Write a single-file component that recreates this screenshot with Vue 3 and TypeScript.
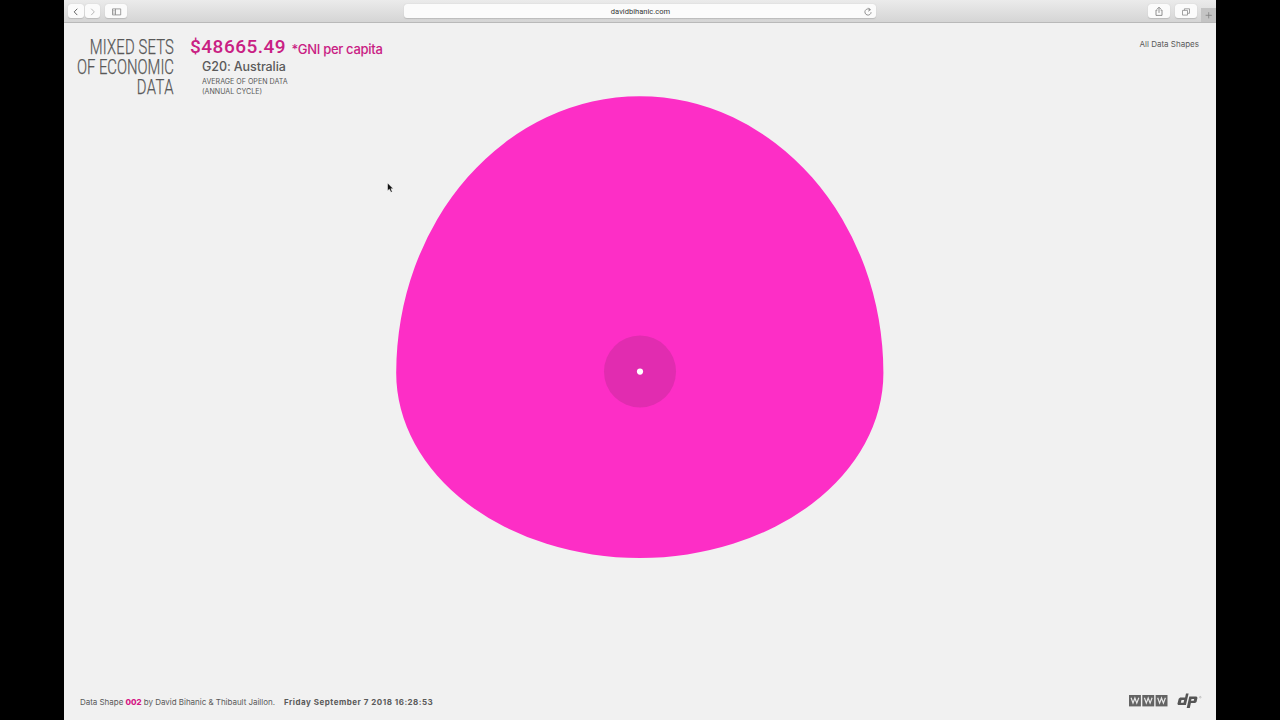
<script setup lang="ts">
interface Reading {
  value: string
  indicator: string
  region: string
}

const titleLines: string[] = ['MIXED SETS', 'OF ECONOMIC', 'DATA']
const reading: Reading = {
  value: '$48665.49',
  indicator: '*GNI per capita',
  region: 'G20: Australia',
}
const wwwTiles: number[] = [0, 13.3, 26.6]
</script>

<template>
  <div class="screen">
    <div class="browser">
      <header class="toolbar">
        <div class="group nav">
          <button class="btn back" aria-label="Back">
            <svg width="16" height="13" viewBox="0 0 16 13"><path d="M9.3 3.7 6.2 6.9l3.1 3.2" fill="none" stroke="#666" stroke-width="1" /></svg>
          </button>
          <button class="btn forward" aria-label="Forward">
            <svg width="15" height="13" viewBox="0 0 15 13"><path d="m6.2 3.7 3.1 3.2-3.1 3.2" fill="none" stroke="#b0b0b0" stroke-width=".9" /></svg>
          </button>
          <button class="btn side" aria-label="Sidebar">
            <svg width="22" height="13" viewBox="0 0 22 13"><g fill="none" stroke="#858585" stroke-width=".8"><path d="M7.5 3.9h8.2v6H7.5zM10.5 3.9v6" /><path d="M8.3 5.5h1.4M8.3 6.9h1.4M8.3 8.3h1.4" stroke-width=".6" /></g></svg>
          </button>
        </div>
        <div class="address">
          <span class="host">davidbihanic.com</span>
          <svg class="reload" width="10" height="10" viewBox="0 0 10 10"><path d="M7.2 2.8A3.1 3.1 0 1 0 8.1 5.2M5.4 .8l2 2-2.2 1.4" fill="none" stroke="#777" stroke-width=".8" /></svg>
        </div>
        <div class="group tools">
          <button class="btn share" aria-label="Share">
            <svg width="22" height="13" viewBox="0 0 22 13"><path d="M9.5 5H8v5.4h6V5h-1.5M11 7.9V2.5M9.2 4 11 2.2 12.8 4" fill="none" stroke="#777" stroke-width=".8" /></svg>
          </button>
          <button class="btn tabs" aria-label="Tabs">
            <svg width="22" height="13" viewBox="0 0 22 13"><path d="M7.5 5.4h5v4.7h-5zM9.4 5.3V3.8h5.1v4.5h-1.9" fill="none" stroke="#8c8c8c" stroke-width=".8" /></svg>
          </button>
        </div>
        <div class="new-tab">
          <svg width="15" height="14" viewBox="0 0 15 14"><path d="M4.6 7.3h6.2M7.7 4.2v6.2" stroke="#808080" stroke-width=".8" /></svg>
        </div>
      </header>

      <main class="page">
        <svg class="shape" width="488" height="463" viewBox="0 0 488 463">
          <path d="M.2 277A243.6 276.8 0 0 1 487.4 277A243.6 185 0 0 1 .2 277Z" fill="#fd2ec6" />
          <circle cx="244" cy="275.6" r="36" fill="#e12cb0" />
          <circle cx="244" cy="275.6" r="3.1" fill="#fff" />
        </svg>

        <div class="top">
          <h1 class="title">
            <span v-for="line in titleLines" :key="line">{{ line }}</span>
          </h1>
          <section class="reading">
            <div class="figure">
              <strong class="value">{{ reading.value }}</strong>
              <span class="indicator">{{ reading.indicator }}</span>
            </div>
            <div class="region">{{ reading.region }}</div>
            <p class="note">AVERAGE OF OPEN DATA<br />(ANNUAL CYCLE)</p>
          </section>
          <a class="all">All Data Shapes</a>
        </div>

        <footer class="bottom">
          <p class="credit">Data Shape <b>002</b> by David Bihanic &amp; Thibault Jaillon.</p>
          <time class="clock">Friday September 7 2018 16:28:53</time>
          <div class="logos">
            <svg width="39" height="13" viewBox="0 0 39 13">
              <g v-for="x in wwwTiles" :key="x" :transform="`translate(${x} 0)`">
                <rect width="11.9" height="11.4" fill="#646464" />
                <path d="m2.1 2.8 1.9 5.3L5.9 3l1.9 5.1 2-5.3" fill="none" stroke="#e8e8e8" stroke-width="1.2" />
              </g>
            </svg>
            <svg class="dp" width="26" height="18" viewBox="0 0 26 18">
              <path d="M9 1.4h2.6L8.9 13.1H1.2L.4 12l1.3-5.2 1.4-1.2h5zM4.5 8l-.7 2.8h2.7L7.2 8z" fill="#555" fill-rule="evenodd" />
              <path d="M12.3 4.6h7.2l1 1.1-1 4.2-1.4 1.2h-4.2L12.8 16H9.7zm2.2 2.3-.5 1.9h2.7l.5-1.9z" fill="#555" fill-rule="evenodd" />
              <circle cx="23.3" cy="5.2" r=".8" fill="none" stroke="#999" stroke-width=".5" />
            </svg>
          </div>
        </footer>
      </main>
    </div>
    <svg class="cursor" width="8" height="12" viewBox="0 0 8 12"><path d="M.5.9v7.8l1.9-1.5 1.5 3.1 1.4-.6-1.4-3h2.4z" fill="#111" stroke="#fff" stroke-width=".5" /></svg>
  </div>
</template>

<style>
body {
  margin: 0;
  background: #000;
}
</style>

<style scoped>
.screen {
  position: relative;
  display: flex;
  justify-content: center;
  width: 1280px;
  height: 720px;
  overflow: hidden;
  background: #000;
  color: #5a5a5a;
  font-family: Inter, "Liberation Sans", sans-serif;
}
.browser {
  display: flex;
  flex-direction: column;
  width: 1152px;
  background: #f1f1f1;
}
.toolbar {
  box-sizing: border-box;
  position: relative;
  display: grid;
  grid-template-columns: 340px 472px 1fr;
  height: 23px;
  padding-top: 4px;
  background: linear-gradient(#ebebeb, #d5d5d5);
  border-bottom: 1px solid #b9b9b9;
}
.group {
  display: flex;
  align-items: flex-start;
}
.nav {
  padding-left: 4px;
}
.tools {
  justify-content: flex-end;
  padding-right: 19px;
  gap: 5px;
}
.btn {
  height: 14px;
  width: 22px;
  padding: 0;
  border: 0;
  border-radius: 3px;
  background: #fbfbfb;
  box-shadow: 0 0.5px 1px #bbb;
}
.btn svg {
  display: block;
}
.back {
  width: 16px;
}
.forward {
  width: 15px;
  margin-left: 1px;
}
.side {
  margin-left: 5px;
}
.address {
  display: flex;
  align-items: center;
  justify-content: center;
  position: relative;
  height: 14px;
  border-radius: 3px;
  background: #fbfbfb;
  box-shadow: 0 0.5px 1px #bbb;
}
.host {
  color: #333;
  font: 7.5px/14px Roboto, sans-serif;
  letter-spacing: 0.03px;
  padding: 1px 0 0 1px;
}
.reload {
  position: absolute;
  right: 3px;
  top: 3px;
}
.new-tab {
  position: absolute;
  right: 0;
  bottom: 0;
  width: 15px;
  height: 14px;
  background: #c4c4c4;
}
.new-tab svg {
  display: block;
}
.page {
  position: relative;
  display: flex;
  flex-direction: column;
  justify-content: space-between;
  flex: 1;
}
.shape {
  position: absolute;
  left: 332px;
  top: 73px;
}
.top {
  display: flex;
  padding: 14px 17px 0 0;
}
.title {
  width: 150px;
  margin: 1px 0 0 -40px;
  color: #585858;
  font: 300 19.5px/20px Roboto, sans-serif;
  -webkit-text-stroke: 0.25px #585858;
  text-align: right;
  transform: scaleX(0.76);
  transform-origin: right;
}
.title span {
  display: block;
}
.title span:first-child {
  letter-spacing: 0.2px;
}
.title span:last-child {
  letter-spacing: 0.6px;
}
.reading {
  margin-left: 16px;
}
.figure {
  display: flex;
  align-items: baseline;
  height: 20px;
  color: #c92083;
  line-height: 20px;
}
.value {
  width: 101.5px;
  font-family: Roboto, sans-serif;
  font-size: 19px;
  font-weight: 500;
  letter-spacing: 0.5px;
}
.indicator {
  position: relative;
  top: 1px;
  font-size: 13px;
  font-weight: 500;
  letter-spacing: -0.3px;
}
.region {
  margin: 1px 0 0 12px;
  font-size: 12.5px;
  font-weight: 500;
  line-height: 18px;
  letter-spacing: -0.08px;
}
.note {
  margin: 1px 0 0 12px;
  font-size: 7.1px;
  line-height: 10px;
}
.all {
  margin: 0 0 0 auto;
  font-size: 8px;
  line-height: 14px;
}
.bottom {
  display: flex;
  align-items: center;
  height: 22px;
  padding: 0 13px 7px 16px;
  font-size: 8px;
}
.credit {
  width: 204px;
  margin: 0;
  white-space: nowrap;
  letter-spacing: -0.03px;
}
.credit b {
  color: #d51886;
  font-weight: 800;
}
.clock {
  font-weight: 700;
  letter-spacing: 0.5px;
}
.logos {
  display: flex;
  align-items: center;
  gap: 9px;
  margin-left: auto;
  padding-bottom: 2px;
}
.cursor {
  position: absolute;
  left: 387px;
  top: 182px;
}
</style>
